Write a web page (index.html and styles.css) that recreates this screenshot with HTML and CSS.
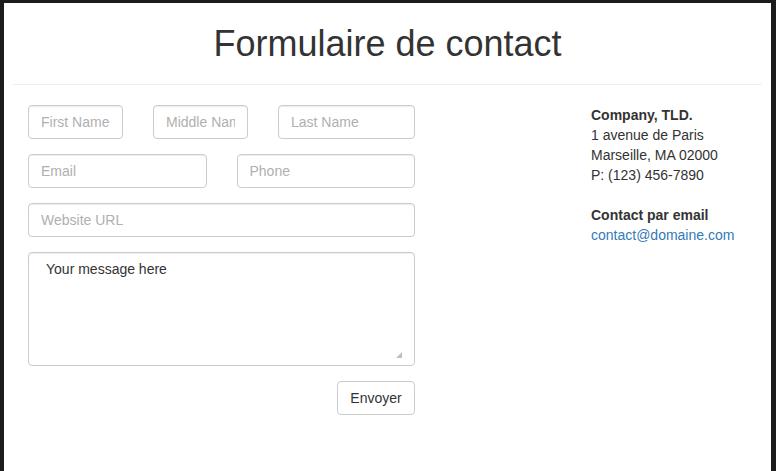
FILE: index.html
```html
<!DOCTYPE html>
<html lang="fr">
<head>
<meta charset="utf-8">
<title>Formulaire de contact</title>
<link rel="stylesheet" href="styles.css">
</head>
<body>
<div class="frame">
  <header class="page-header">
    <h1>Formulaire de contact</h1>
  </header>
  <main class="content">
    <form class="contact-form">
      <div class="row row-names">
        <input class="field" type="text" placeholder="First Name">
        <input class="field" type="text" placeholder="Middle Name">
        <input class="field" type="text" placeholder="Last Name">
      </div>
      <div class="row row-half">
        <input class="field" type="text" placeholder="Email">
        <input class="field" type="text" placeholder="Phone">
      </div>
      <div class="row">
        <input class="field full" type="text" placeholder="Website URL">
      </div>
      <div class="row message-wrap">
        <textarea class="field message">Your message here</textarea>
        <span class="grip"></span>
      </div>
      <div class="row row-actions">
        <button class="btn" type="button">Envoyer</button>
      </div>
    </form>
    <aside class="address">
      <p><strong>Company, TLD.</strong><br>1 avenue de Paris<br>Marseille, MA 02000<br>P: (123) 456-7890</p>
      <p><strong>Contact par email</strong><br><a href="#">contact@domaine.com</a></p>
    </aside>
  </main>
</div>
</body>
</html>
```

FILE: styles.css
```css
html, body {
  margin: 0;
  padding: 0;
  background: #1c1c1c;
}
body {
  font-family: "Liberation Sans", Arial, sans-serif;
  font-size: 14px;
  line-height: 20px;
  color: #333;
}
.frame {
  margin: 3px 5px 0 4px;
  background: #fff;
  height: 468px;
  padding: 0 9px;
  box-sizing: border-box;
}
.page-header {
  border-bottom: 1px solid #eee;
  height: 82px;
  box-sizing: border-box;
  padding-top: 21px;
}
.page-header h1 {
  margin: 0;
  font-size: 36px;
  font-weight: 500;
  line-height: 40px;
  text-align: center;
}
.content {
  display: flex;
  padding: 20px 15px 0;
}
.contact-form {
  width: 387px;
  display: flex;
  flex-direction: column;
  gap: 15px;
}
.row {
  display: flex;
  gap: 30px;
}
.row-names .field:nth-child(1),
.row-names .field:nth-child(2) { width: 95px; }
.row-names .field:nth-child(3) { width: 137px; }
.row-half .field { flex: 1; }
.field {
  box-sizing: border-box;
  height: 34px;
  padding: 6px 12px;
  font-family: inherit;
  font-size: 14px;
  line-height: 20px;
  color: #555;
  border: 1px solid #ccc;
  border-radius: 4px;
  background: #fff;
  box-shadow: inset 0 1px 1px rgba(0,0,0,.075);
  min-width: 0;
  margin: 0;
}
.field::placeholder { color: #b0b0b0; }
.field.full { width: 100%; }
.message-wrap { position: relative; }
.message {
  width: 100%;
  height: 114px;
  padding: 6px 17px;
  resize: none;
  color: #333;
}
.grip {
  position: absolute;
  right: 13px;
  bottom: 8px;
  width: 6px;
  height: 6px;
  background:
    radial-gradient(circle, #bbb 0.7px, transparent 0.8px) 0 0 / 2px 2px;
  clip-path: polygon(100% 0, 100% 100%, 0 100%);
}
.row-actions { justify-content: flex-end; }
.btn {
  height: 34px;
  padding: 6px 12px;
  font-family: inherit;
  font-size: 14px;
  line-height: 20px;
  color: #333;
  background: #fff;
  border: 1px solid #ccc;
  border-radius: 4px;
  width: 78px;
}
.address {
  margin-left: 176px;
}
.address p { margin: 0 0 20px; }
.address strong { font-weight: bold; }
.address a { color: #337ab7; text-decoration: none; }
```
